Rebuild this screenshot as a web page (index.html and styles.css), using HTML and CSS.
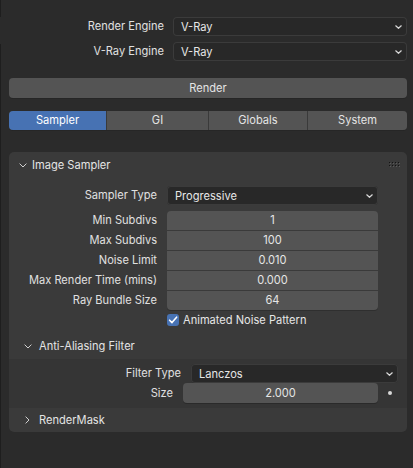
FILE: index.html
```html
<!DOCTYPE html>
<html lang="en">
<head>
<meta charset="utf-8">
<title>Render Properties</title>
<link rel="stylesheet" href="styles.css">
</head>
<body>
<div class="editor">
  <div class="top-rows">
    <div class="top-row">
      <span class="label">Render Engine</span>
      <div class="dropdown"><span>V-Ray</span><svg class="dd-chev" width="7" height="4" viewBox="0 0 7 4"><path d="M0.5 0.5 L3.5 3.3 L6.5 0.5" fill="none" stroke="#d8d8d8" stroke-width="1.2"/></svg></div>
    </div>
    <div class="top-row">
      <span class="label">V-Ray Engine</span>
      <div class="dropdown"><span>V-Ray</span><svg class="dd-chev" width="7" height="4" viewBox="0 0 7 4"><path d="M0.5 0.5 L3.5 3.3 L6.5 0.5" fill="none" stroke="#d8d8d8" stroke-width="1.2"/></svg></div>
    </div>
  </div>

  <div class="button render-btn">Render</div>

  <div class="tabs">
    <div class="tab active">Sampler</div>
    <div class="tab">GI</div>
    <div class="tab">Globals</div>
    <div class="tab">System</div>
  </div>

  <section class="panel">
    <div class="panel-header">
      <svg class="chev-down" width="8" height="5" viewBox="0 0 8 5"><path d="M0.6 0.6 L4 4 L7.4 0.6" fill="none" stroke="#d0d0d0" stroke-width="1"/></svg>
      <span class="header-title">Image Sampler</span>
      <svg class="grip" width="12" height="5" viewBox="0 0 12 5">
        <g fill="#5a5a5a"><rect x="1" y="1" width="1" height="1"/><rect x="4" y="1" width="1" height="1"/><rect x="7" y="1" width="1" height="1"/><rect x="10" y="1" width="1" height="1"/><rect x="1" y="4" width="1" height="1"/><rect x="4" y="4" width="1" height="1"/><rect x="7" y="4" width="1" height="1"/><rect x="10" y="4" width="1" height="1"/></g>
        <g fill="#141414"><rect x="0" y="0" width="1" height="1"/><rect x="3" y="0" width="1" height="1"/><rect x="6" y="0" width="1" height="1"/><rect x="9" y="0" width="1" height="1"/><rect x="0" y="3" width="1" height="1"/><rect x="3" y="3" width="1" height="1"/><rect x="6" y="3" width="1" height="1"/><rect x="9" y="3" width="1" height="1"/></g>
      </svg>
    </div>

    <div class="panel-body">
      <div class="prop-row">
        <span class="label">Sampler Type</span>
        <div class="dropdown"><span>Progressive</span><svg class="dd-chev" width="7" height="4" viewBox="0 0 7 4"><path d="M0.5 0.5 L3.5 3.3 L6.5 0.5" fill="none" stroke="#d8d8d8" stroke-width="1.2"/></svg></div>
      </div>

      <div class="field-group">
        <div class="prop-row"><span class="label">Min Subdivs</span><div class="num">1</div></div>
        <div class="prop-row"><span class="label">Max Subdivs</span><div class="num">100</div></div>
        <div class="prop-row"><span class="label">Noise Limit</span><div class="num">0.010</div></div>
        <div class="prop-row"><span class="label">Max Render Time (mins)</span><div class="num">0.000</div></div>
        <div class="prop-row"><span class="label">Ray Bundle Size</span><div class="num">64</div></div>
      </div>

      <div class="check-row">
        <span class="checkbox"><svg width="12" height="12" viewBox="0 0 12 12"><path d="M2.6 6.2 L5 8.6 L9.6 3.2" fill="none" stroke="#ffffff" stroke-width="1.6" stroke-linecap="round" stroke-linejoin="round"/></svg></span>
        <span class="check-label">Animated Noise Pattern</span>
      </div>
    </div>

    <div class="sub-header">
      <svg class="chev-down" width="8" height="5" viewBox="0 0 8 5"><path d="M0.6 0.6 L4 4 L7.4 0.6" fill="none" stroke="#d0d0d0" stroke-width="1"/></svg>
      <span class="header-title">Anti-Aliasing Filter</span>
    </div>
    <div class="sub-body">
      <div class="filter-row">
        <span class="label">Filter Type</span>
        <div class="dropdown"><span>Lanczos</span><svg class="dd-chev" width="7" height="4" viewBox="0 0 7 4"><path d="M0.5 0.5 L3.5 3.3 L6.5 0.5" fill="none" stroke="#d8d8d8" stroke-width="1.2"/></svg></div>
      </div>
      <div class="size-row">
        <span class="label">Size</span>
        <div class="num single">2.000</div>
        <span class="decorator"></span>
      </div>
    </div>

    <div class="sub-header last">
      <svg class="chev-right" width="5" height="8" viewBox="0 0 5 8"><path d="M0.6 0.6 L4 4 L0.6 7.4" fill="none" stroke="#d0d0d0" stroke-width="1"/></svg>
      <span class="header-title">RenderMask</span>
    </div>
  </section>
</div>
</body>
</html>
```

FILE: styles.css
```css
html, body {
  margin: 0;
  padding: 0;
}

body {
  width: 413px;
  height: 468px;
  overflow: hidden;
  background:
    linear-gradient(to bottom, #1e1e1e 0 17px, transparent 17px 44px, #1e1e1e 44px) left top / 1px 100% no-repeat,
    #2b2b2b;
  font-family: Inter, "Noto Sans", "DejaVu Sans", sans-serif;
  font-size: 11.1px;
  color: #e4e4e4;
}

.editor {
  padding: 17px 6px 0 9px;
}

/* top rows */
.top-rows {
  display: flex;
  flex-direction: column;
  gap: 6px;
}

.top-row {
  display: grid;
  grid-template-columns: 155px 234px;
  column-gap: 9px;
  height: 19px;
}

.label {
  text-align: right;
  line-height: 19px;
  white-space: nowrap;
  color: #e0e0e0;
}

.dropdown {
  display: flex;
  align-items: center;
  justify-content: space-between;
  background: #282828;
  box-shadow: inset 0 0 0 1px #3b3b3b;
  border-radius: 4px;
  padding: 0 5px 0 8px;
  color: #e6e6e6;
}

.dd-chev {
  display: block;
}

/* render button */
.button {
  background: #545454;
  border-radius: 4px;
  text-align: center;
  height: 20px;
  line-height: 20px;
  color: #e4e4e4;
  box-shadow: 0 1px 0 #262626;
}

.render-btn {
  margin-top: 17px;
}

/* tabs */
.tabs {
  margin-top: 13px;
  display: grid;
  grid-template-columns: 97px 101px 98px 1fr;
  column-gap: 1px;
  height: 19px;
  border-radius: 4px;
  overflow: hidden;
  background: #3a3a3a;
  box-shadow: 0 1px 0 #262626;
}

.tab {
  background: #545454;
  text-align: center;
  line-height: 19px;
  color: #e4e4e4;
}

.tab.active {
  background: #4772b3;
  color: #ffffff;
}

/* panel */
.panel {
  margin-top: 22px;
  background: #3a3a3a;
  border-radius: 5px;
  overflow: hidden;
}

.panel-header {
  height: 26px;
  display: flex;
  align-items: center;
  padding-left: 10px;
  padding-right: 6px;
}

.chev-down {
  display: block;
  flex: none;
}

.header-title {
  margin-left: 5px;
  color: #e4e4e4;
}

.grip {
  margin-left: auto;
  margin-top: -1px;
  display: block;
}

.panel-body {
  padding: 8px 0 7px 0;
}

.prop-row {
  display: grid;
  grid-template-columns: 148px 211px;
  column-gap: 10px;
  height: 19px;
}

.field-group {
  margin-top: 6px;
  display: flex;
  flex-direction: column;
  gap: 1px;
}

.num {
  background: #545454;
  text-align: center;
  line-height: 19px;
  color: #e6e6e6;
}

.field-group .prop-row:first-child .num {
  border-radius: 4px 4px 0 0;
}

.field-group .prop-row:last-child .num {
  border-radius: 0 0 4px 4px;
  box-shadow: 0 1px 0 #2f2f2f;
}

.num.single {
  border-radius: 4px;
  height: 20px;
  line-height: 20px;
  box-shadow: 0 1px 0 #2a2a2a;
}

.check-row {
  margin-top: 4px;
  margin-left: 158px;
  display: flex;
  align-items: center;
  height: 12px;
  gap: 4px;
}

.checkbox {
  width: 12px;
  height: 12px;
  border-radius: 3px;
  background: #4772b3;
  display: block;
}

.checkbox svg {
  display: block;
}

.check-label {
  color: #e6e6e6;
}

/* sub panels */
.sub-header {
  height: 26px;
  display: flex;
  align-items: center;
  padding-left: 15px;
}

.sub-header .header-title {
  margin-left: 7px;
}

.sub-header.last {
  height: 24px;
  padding-left: 16px;
}

.sub-header.last .header-title {
  margin-left: 9px;
}

.chev-right {
  display: block;
}

.sub-body {
  background: #353535;
  padding: 5px 0 5px 0;
}

.filter-row {
  display: grid;
  grid-template-columns: 172px 207px;
  column-gap: 10px;
  height: 19px;
}

.size-row {
  display: grid;
  grid-template-columns: 164px 195px 22px;
  column-gap: 10px;
  height: 20px;
  align-items: center;
}

.size-row .label {
  line-height: 20px;
}

.decorator {
  width: 4px;
  height: 4px;
  border-radius: 50%;
  background: #d8d8d8;
}
```
